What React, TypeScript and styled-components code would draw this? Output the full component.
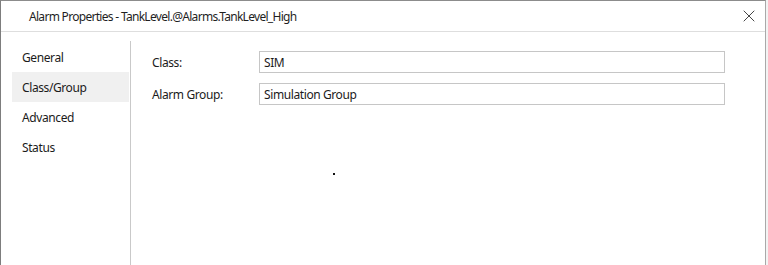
import styled, { createGlobalStyle } from 'styled-components'
import { X } from 'lucide-react'

const GlobalStyle = createGlobalStyle`
  html, body {
    margin: 0;
    padding: 0;
    background: #f3f3f3;
  }
  body {
    font-family: 'Noto Sans', 'Open Sans', sans-serif;
    color: #1b1b1b;
    letter-spacing: -0.4px;
  }
`

const Window = styled.div`
  width: 764px;
  height: 264px;
  background: #ffffff;
  border-top: 1px solid #8c8c8c;
  border-left: 1px solid #7d7d7d;
  border-right: 1px solid #a9a9a9;
  display: flex;
  flex-direction: column;
  overflow: hidden;
`

const TitleBar = styled.header`
  height: 30px;
  flex: none;
  display: flex;
  align-items: center;
  justify-content: space-between;
  padding: 0 6px 0 28px;
  border-bottom: 1px solid #dedede;
  font-size: 12px;
  letter-spacing: -0.7px;
  color: #1f1f1f;
`

const CloseButton = styled.button`
  border: none;
  background: none;
  padding: 0;
  display: flex;
  color: #333;
`

const Body = styled.div`
  flex: 1;
  display: flex;
  padding-top: 9px;
  font-size: 12px;
`

const Sidebar = styled.nav`
  width: 129px;
  flex: none;
  padding-top: 1px;
  display: flex;
  flex-direction: column;
`

const NavItem = styled.div<{ $active?: boolean }>`
  height: 30px;
  margin-left: 11px;
  width: 117px;
  padding-left: 10px;
  box-sizing: border-box;
  display: flex;
  align-items: center;
  background: ${({ $active }) => ($active ? '#f0f0f0' : 'transparent')};
`

const Content = styled.section`
  flex: 1;
  border-left: 1px solid #c9c9c9;
  padding: 10px 0 0 21px;
  position: relative;
`

const Form = styled.div`
  display: grid;
  grid-template-columns: 107px 466px;
  row-gap: 10px;
  align-items: center;
`

const Label = styled.label``

const Field = styled.input`
  height: 22px;
  box-sizing: border-box;
  border: 1px solid #c6c6c6;
  padding: 0 4px;
  font: inherit;
  letter-spacing: inherit;
  color: #1b1b1b;
  outline: none;
`

const Speck = styled.span`
  position: absolute;
  left: 202px;
  top: 132px;
  width: 2px;
  height: 2px;
  background: #111;
`

const navItems = ['General', 'Class/Group', 'Advanced', 'Status']

export default function App() {
  return (
    <>
      <GlobalStyle />
      <Window>
        <TitleBar>
          <span>Alarm Properties - TankLevel.@Alarms.TankLevel_High</span>
          <CloseButton>
            <X size={20} strokeWidth={1.1} />
          </CloseButton>
        </TitleBar>
        <Body>
          <Sidebar>
            {navItems.map((item) => (
              <NavItem key={item} $active={item === 'Class/Group'}>
                {item}
              </NavItem>
            ))}
          </Sidebar>
          <Content>
            <Form>
              <Label>Class:</Label>
              <Field defaultValue="SIM" />
              <Label>Alarm Group:</Label>
              <Field defaultValue="Simulation Group" />
            </Form>
            <Speck />
          </Content>
        </Body>
      </Window>
    </>
  )
}
